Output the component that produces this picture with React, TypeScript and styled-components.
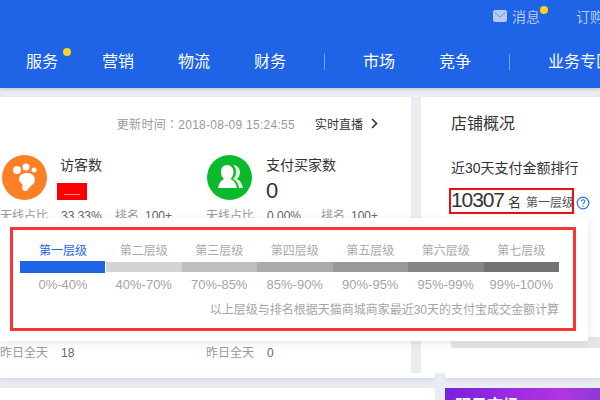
import React from "react";
import styled, { createGlobalStyle } from "styled-components";

const Global = createGlobalStyle`
  html, body { margin: 0; padding: 0; width: 600px; height: 400px; overflow: hidden; background: #e9ecf2; }
  body { font-family: "Liberation Sans", "Noto Sans CJK SC", sans-serif; }
  * { box-sizing: border-box; }
`;

const Page = styled.div`
  position: relative;
  width: 600px;
  height: 400px;
  overflow: hidden;
`;

const Header = styled.header`
  height: 88px;
  background: #1f63e6;
  box-shadow: 0 1px 4px rgba(60, 70, 90, 0.25);
  display: flex;
  flex-direction: column;
  position: relative;
`;

const TopLinks = styled.div`
  height: 44px;
  display: flex;
  justify-content: flex-start;
  padding: 9px 0 0 493px;
  white-space: nowrap;
`;

const TopLink = styled.span`
  display: flex;
  align-items: center;
  gap: 5px;
  height: 14px;
  margin-right: 36px;
  font-size: 14px;
  color: #b6caf6;
  position: relative;
  flex: none;
`;

const Dot = styled.i<{ $x: number; $y: number }>`
  position: absolute;
  left: ${(p) => p.$x}px;
  top: ${(p) => p.$y}px;
  width: 8px;
  height: 8px;
  border-radius: 50%;
  background: #f7d31f;
`;

const Nav = styled.nav`
  display: flex;
  align-items: center;
  padding: 0 0 0 26px;
  height: 36px;
  white-space: nowrap;
`;

const NavItem = styled.span`
  position: relative;
  flex: none;
  margin-right: 44px;
  font-size: 16px;
  line-height: 22px;
  color: #fff;
`;

const NavSep = styled.span`
  flex: none;
  width: 1px;
  height: 16px;
  margin: 0 38px 0 -6px;
  background: rgba(255, 255, 255, 0.4);
`;

const Board = styled.main`
  display: grid;
  grid-template-columns: 411px 179px;
  column-gap: 10px;
  padding-top: 9px;
`;

const Card = styled.section`
  background: #fff;
  height: 276px;
`;

const LeftCard = styled(Card)`
  padding: 19px 33px 0 0;
`;

const RightCard = styled(Card)`
  padding: 17px 0 0 30px;
  position: relative;
`;

const StatusRow = styled.div`
  display: flex;
  justify-content: flex-end;
  align-items: center;
  height: 14px;
  font-size: 12px;
  white-space: nowrap;
`;

const Updated = styled.span`
  font-family: "Liberation Sans", "Noto Sans CJK TC", sans-serif;
  letter-spacing: 0.28px;
  color: #999;
  margin-right: 20px;
`;

const Live = styled.span`
  display: flex;
  align-items: center;
  gap: 8px;
  color: #333;
`;

const Metrics = styled.div`
  display: grid;
  grid-template-columns: 206px 170px;
  margin-top: 25px;
`;

const Metric = styled.div`
  display: grid;
  grid-template-columns: 60px 1fr;
  grid-template-rows: 45px auto;
`;

const MetricIcon = styled.div<{ $bg: string; $inset: number }>`
  width: 45px;
  height: 45px;
  margin-left: ${(p) => p.$inset}px;
  border-radius: 50%;
  background: ${(p) => p.$bg};
  overflow: hidden;
`;

const MetricBody = styled.div`
  display: flex;
  flex-direction: column;
  align-items: flex-start;
`;

const MetricName = styled.div`
  font-size: 14px;
  line-height: 20px;
  color: #333;
  white-space: nowrap;
`;

const MetricValue = styled.div`
  font-size: 22px;
  line-height: 26px;
  margin-top: 3px;
  color: #333;
`;

const Mask = styled.div`
  width: 30px;
  height: 20px;
  margin: 8px 0 0 -3px;
  background: #ff0000;
  display: flex;
  align-items: center;
  justify-content: center;
  padding-top: 6px;
  &::after {
    content: "";
    width: 16px;
    height: 1px;
    background: #ff9a9a;
  }
`;

const StatLine = styled.div`
  grid-column: 1 / 3;
  display: grid;
  grid-template-columns: 61px 54px 30px auto;
  font-size: 12px;
  line-height: 16px;
  margin-top: 8px;
  color: #999;
  white-space: nowrap;
`;

const StatValue = styled.span`
  color: #666;
`;

const YesterdayRow = styled.div`
  display: grid;
  grid-template-columns: 206px 170px;
  margin-top: 121px;
`;

const Yesterday = styled.div`
  display: grid;
  grid-template-columns: 61px auto;
  font-size: 12px;
  line-height: 16px;
  color: #999;
  white-space: nowrap;
`;

const PanelTitle = styled.h2`
  margin: 0;
  font-size: 16px;
  line-height: 20px;
  font-weight: 400;
  color: #333;
`;

const RankLabel = styled.div`
  margin-top: 24px;
  font-size: 14px;
  line-height: 20px;
  color: #333;
  white-space: nowrap;
`;

const RankRow = styled.div`
  display: flex;
  align-items: center;
  margin: 10px 0 0 -2px;
`;

const RankBox = styled.div`
  width: 125px;
  height: 26px;
  border: 2px solid #ee0f16;
  display: flex;
  align-items: baseline;
  white-space: nowrap;
  color: #333;
`;

const RankNum = styled.span`
  font-size: 21px;
  line-height: 20px;
  letter-spacing: -1.1px;
  margin-right: 4px;
`;

const RankUnit = styled.span`
  font-size: 13px;
  margin-right: 5px;
`;

const RankTier = styled.span`
  font-size: 12px;
  color: #555;
`;

const HelpIcon = styled.svg`
  margin: 3px 0 0 2px;
  flex: none;
`;

const ShadeBar = styled.div`
  position: absolute;
  left: 30px;
  right: 0;
  top: 240px;
  height: 11px;
  background: #e6e6e6;
`;

const Lip = styled.div`
  display: grid;
  grid-template-columns: 435px 155px;
  column-gap: 10px;
  height: 5px;
`;

const LipPart = styled.div`
  background: #fff;
  box-shadow: 0 2px 4px rgba(120, 130, 150, 0.2);
`;

const BottomRow = styled.div`
  display: grid;
  grid-template-columns: 435px 155px;
  column-gap: 10px;
  margin-top: 10px;
  height: 40px;
`;

const Plain = styled.div`
  background: #fff;
`;

const Promo = styled.div`
  background: linear-gradient(90deg, #7a20de 0%, #b234e4 75%, #8d3ad6 100%);
  padding: 8px 0 0 10px;
  font-size: 16px;
  line-height: 20px;
  font-weight: 700;
  color: #fff;
`;

const Popup = styled.aside`
  position: absolute;
  left: 0;
  top: 218px;
  width: 588px;
  height: 123px;
  padding: 9px 12px 0 10px;
  background: #fff;
  box-shadow: 0 2px 8px rgba(120, 120, 130, 0.18);
`;

const TierFrame = styled.div`
  height: 104px;
  border: 3px solid #f83636;
  padding: 13px 14px 0 7px;
  display: flex;
  flex-direction: column;
`;

const Tiers = styled.div`
  display: grid;
  grid-template-columns: 86px repeat(6, 75.5px);
`;

const Tier = styled.div`
  display: flex;
  flex-direction: column;
  align-items: center;
`;

const TierName = styled.span<{ $active?: boolean }>`
  font-size: 12px;
  line-height: 16px;
  white-space: nowrap;
  color: ${(p) => (p.$active ? "#1f63e6" : "#aaa")};
`;

const BarSlot = styled.div`
  height: 12px;
  width: 100%;
  margin-top: 2px;
  display: flex;
  align-items: center;
`;

const TierBar = styled.div<{ $color: string; $active?: boolean }>`
  width: 100%;
  height: ${(p) => (p.$active ? 12 : 10)}px;
  margin-right: ${(p) => (p.$active ? 1 : 0)}px;
  background: ${(p) => p.$color};
`;

const TierRange = styled.span`
  font-size: 13px;
  line-height: 16px;
  margin-top: 4px;
  color: #a5a5a5;
  white-space: nowrap;
`;

const Note = styled.div`
  margin-top: 9px;
  font-size: 12px;
  line-height: 16px;
  text-align: right;
  color: #a5a5a5;
  white-space: nowrap;
`;

const tiers = [
  { name: "第一层级", range: "0%-40%", color: "#1f63e6", active: true },
  { name: "第二层级", range: "40%-70%", color: "#d4d4d4" },
  { name: "第三层级", range: "70%-85%", color: "#bfbfbf" },
  { name: "第四层级", range: "85%-90%", color: "#ababab" },
  { name: "第五层级", range: "90%-95%", color: "#999999" },
  { name: "第六层级", range: "95%-99%", color: "#858585" },
  { name: "第七层级", range: "99%-100%", color: "#727272" },
];

const FootIcon = () => (
  <svg width="45" height="45" viewBox="0 0 45 45" aria-hidden="true">
    <circle cx="15" cy="15" r="4" fill="#fff" />
    <circle cx="24" cy="12" r="3.500" fill="#fff" />
    <circle cx="32" cy="15" r="2.500" fill="#fff" />
    <path
      d="M17 24c0-4 4-6 8-6 5 0 8 3 8 7 0 4-4 5-6 8-1 2-2 3-4 3-3 0-3-3-2.500-5 .5-3-3.500-3-3.500-7z"
      fill="#fff"
    />
  </svg>
);

const PeopleIcon = () => (
  <svg width="45" height="45" viewBox="0 0 45 45" aria-hidden="true">
    <path d="M26 10c4 0 7 3 7 7 0 3-1 5-3 7 3 1 5 4 6 9h-4c-1-5-3-8-6-9 2-2 3-4 3-7 0-3-1-5-3-7z" fill="#e6f7d8" />
    <path
      d="M20 10c4 0 6.500 3 6.500 7 0 3-1 5-3 7 3 1 5.500 4 6.500 9H11c1-5 3-8 6-9-2-2-3-4-3-7 0-4 2-7 6-7z"
      fill="#fff"
    />
  </svg>
);

const MailIcon = () => (
  <svg width="14" height="12" viewBox="0 0 14 12" aria-hidden="true">
    <rect width="14" height="12" rx="2" fill="#b6caf6" />
    <path d="M1.500 2.500 7 7l5.500-4.500" fill="none" stroke="#1f63e6" strokeWidth="1" opacity="0.5" />
  </svg>
);

const Chevron = () => (
  <svg width="7" height="11" viewBox="0 0 7 11" aria-hidden="true">
    <path d="M1 1l4.500 4.500L1 10" fill="none" stroke="#333" strokeWidth="1.600" />
  </svg>
);

export default function App() {
  return (
    <Page>
      <Global />
      <Header>
        <TopLinks>
          <TopLink>
            <MailIcon />
            消息
            <Dot $x={47} $y={-3} />
          </TopLink>
          <TopLink>订购</TopLink>
        </TopLinks>
        <Nav>
          <NavItem>
            服务
            <Dot $x={37} $y={-3} />
          </NavItem>
          <NavItem>营销</NavItem>
          <NavItem>物流</NavItem>
          <NavItem>财务</NavItem>
          <NavSep />
          <NavItem>市场</NavItem>
          <NavItem>竞争</NavItem>
          <NavSep />
          <NavItem>业务专区</NavItem>
        </Nav>
      </Header>
      <Board>
        <LeftCard>
          <StatusRow>
            <Updated>更新时间：2018-08-09 15:24:55</Updated>
            <Live>
              实时直播
              <Chevron />
            </Live>
          </StatusRow>
          <Metrics>
            <Metric>
              <MetricIcon $bg="#fe7f26" $inset={2}>
                <FootIcon />
              </MetricIcon>
              <MetricBody>
                <MetricName>访客数</MetricName>
                <Mask />
              </MetricBody>
              <StatLine>
                <span>无线占比</span>
                <StatValue>33.33%</StatValue>
                <span>排名</span>
                <StatValue>100+</StatValue>
              </StatLine>
            </Metric>
            <Metric>
              <MetricIcon $bg="#09bb2c" $inset={1}>
                <PeopleIcon />
              </MetricIcon>
              <MetricBody>
                <MetricName>支付买家数</MetricName>
                <MetricValue>0</MetricValue>
              </MetricBody>
              <StatLine>
                <span>无线占比</span>
                <StatValue>0.00%</StatValue>
                <span>排名</span>
                <StatValue>100+</StatValue>
              </StatLine>
            </Metric>
          </Metrics>
          <YesterdayRow>
            <Yesterday>
              <span>昨日全天</span>
              <StatValue>18</StatValue>
            </Yesterday>
            <Yesterday>
              <span>昨日全天</span>
              <StatValue>0</StatValue>
            </Yesterday>
          </YesterdayRow>
        </LeftCard>
        <RightCard>
          <PanelTitle>店铺概况</PanelTitle>
          <RankLabel>近30天支付金额排行</RankLabel>
          <RankRow>
            <RankBox>
              <RankNum>10307</RankNum>
              <RankUnit>名</RankUnit>
              <RankTier>第一层级</RankTier>
            </RankBox>
            <HelpIcon width="14" height="14" viewBox="0 0 14 14" aria-hidden="true">
              <circle cx="7" cy="7" r="5.800" fill="none" stroke="#2f6fe8" strokeWidth="1.200" />
              <path d="M5.200 5.500c0-1 .8-1.700 1.800-1.700s1.800.7 1.800 1.600c0 1.300-1.800 1.300-1.800 2.800" fill="none" stroke="#2f6fe8" strokeWidth="1.100" />
              <circle cx="7" cy="10" r=".7" fill="#2f6fe8" />
            </HelpIcon>
          </RankRow>
          <ShadeBar />
        </RightCard>
      </Board>
      <Lip>
        <LipPart />
        <LipPart />
      </Lip>
      <BottomRow>
        <Plain />
        <Promo>明日市场</Promo>
      </BottomRow>
      <Popup>
        <TierFrame>
          <Tiers>
            {tiers.map((t) => (
              <Tier key={t.name}>
                <TierName $active={t.active}>{t.name}</TierName>
                <BarSlot>
                  <TierBar $color={t.color} $active={t.active} />
                </BarSlot>
                <TierRange>{t.range}</TierRange>
              </Tier>
            ))}
          </Tiers>
          <Note>以上层级与排名根据天猫商城商家最近30天的支付宝成交金额计算</Note>
        </TierFrame>
      </Popup>
    </Page>
  );
}
